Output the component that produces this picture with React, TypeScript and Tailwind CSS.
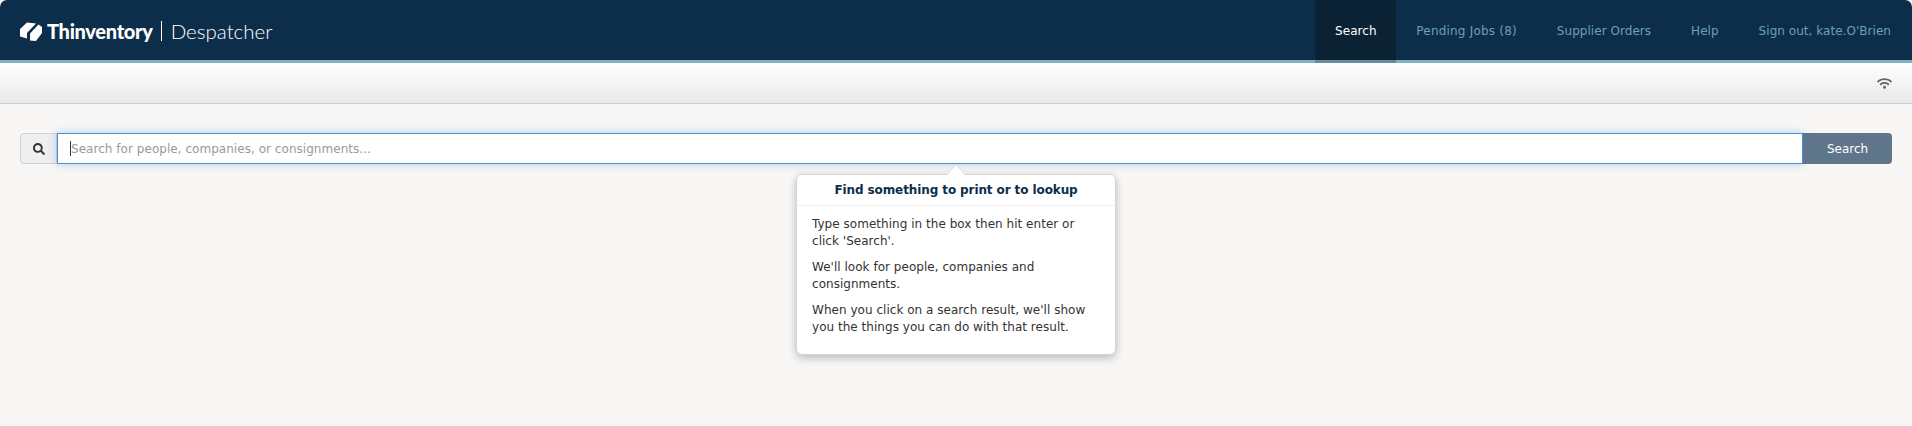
import { FaSearch, FaWifi } from 'react-icons/fa'

const navItems = [
  { label: 'Pending Jobs (8)', className: 'tracking-[0.2px]' },
  { label: 'Supplier Orders', className: '' },
  { label: 'Help', className: '' },
  { label: "Sign out, kate.O'Brien", className: '' },
]

function Logo() {
  return (
    <div className="flex items-center pl-5 pt-[2px] text-white font-['Lato',sans-serif]">
      <svg width="22" height="19" viewBox="0 0 22 19" className="mr-[5px]" fill="white">
        <path d="M0 7 L7 .5 L16 1.5 L7 11 L7 16.5 L0 14.5 Z" />
        <path d="M10 18.5 L10 11.5 L18.5 2.5 L22 5 L22 11 L16 19 Z" />
      </svg>
      <span className="text-[20px] font-black tracking-[-0.3px] leading-none">Thinventory</span>
      <span className="ml-[8px] mr-[9px] w-px h-[20px] bg-white" />
      <span className="text-[20.5px] font-light leading-none">Despatcher</span>
    </div>
  )
}

export default function App() {
  return (
    <div className="h-[426px] bg-[#f8f7f5] font-['DejaVu_Sans',sans-serif] text-[12px] overflow-hidden">
      <header className="h-[63px] bg-[#0c2e4b] border-b-[3px] border-[#85b0c2] flex items-stretch justify-between rounded-t-[7px]">
        <Logo />
        <nav className="flex items-stretch pr-[1px] tracking-[0.04px]">
          <a className="w-[81px] -mb-[3px] pt-[1px] bg-[#0b2235] border-b-[3px] border-[#6a8b9b] flex items-center justify-center text-white">Search</a>
          {navItems.map((item) => (
            <a key={item.label} className={`px-5 pt-[1px] flex items-center text-[#6f9fb5] ${item.className}`}>{item.label}</a>
          ))}
        </nav>
      </header>

      <div className="h-[41px] bg-gradient-to-b from-white to-[#e9e9e9] border-b border-[#cfcfcf] flex items-center justify-end pr-[20px]">
        <FaWifi size={15} className="text-[#666]" />
      </div>

      <div className="px-5 pt-[29px]">
        <div className="flex h-[31px]">
          <div className="w-[37px] bg-[#efefef] border border-[#d0d0d0] rounded-l-[4px] flex items-center justify-center">
            <FaSearch size={12} className="text-[#333]" />
          </div>
          <div className="flex-1 bg-white border border-[#4a90d9] shadow-[0_0_10px_rgba(74,144,217,0.4)] flex items-center pl-[12px] text-[#999] tracking-[0.04px]">
            <span className="w-px h-[15px] bg-[#333]" />
            Search for people, companies, or consignments...
          </div>
          <button className="w-[89px] bg-[#5f7589] text-white rounded-r-[4px]">Search</button>
        </div>

        <div className="relative w-[320px] mx-auto mt-[10px] bg-white border border-[#d5d5d5] rounded-[6px] shadow-[0_3px_8px_rgba(0,0,0,0.25)]">
          <div className="absolute -top-[11px] left-1/2 -ml-[10px] w-0 h-0 border-x-[10px] border-x-transparent border-b-[11px] border-b-[#d5d5d5]" />
          <div className="absolute -top-[10px] left-1/2 -ml-[10px] w-0 h-0 border-x-[10px] border-x-transparent border-b-[11px] border-b-white" />
          <h3 className="h-[31px] border-b border-[#eee] flex items-center justify-center font-bold text-[#0c2e4b] tracking-[-0.1px]">Find something to print or to lookup</h3>
          <div className="px-[15px] pt-[10px] pb-[18px] text-[#333] leading-[17px] space-y-[9px] tracking-[0.03px]">
            <p>Type something in the box then hit enter or click 'Search'.</p>
            <p>We'll look for people, companies and consignments.</p>
            <p>When you click on a search result, we'll show you the things you can do with that result.</p>
          </div>
        </div>
      </div>
    </div>
  )
}
